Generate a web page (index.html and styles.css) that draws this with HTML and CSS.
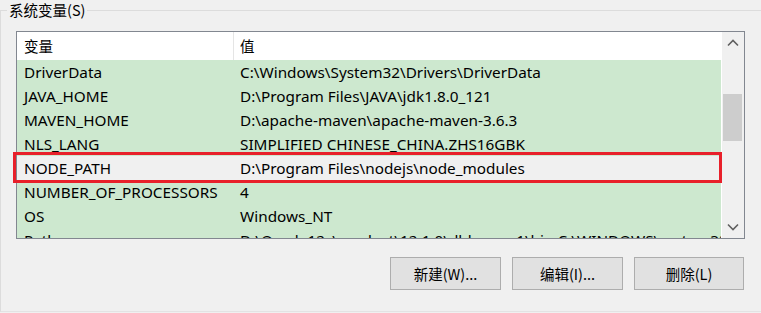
FILE: index.html
```html
<!DOCTYPE html>
<html lang="zh-CN">
<head>
<meta charset="utf-8">
<title>系统变量</title>
<link rel="stylesheet" href="styles.css">
</head>
<body>
<fieldset class="group">
  <legend class="group-title">系统变量(S)</legend>
  <div class="listwrap">
    <div class="listbox">
      <div class="list">
        <div class="row head">
          <div class="cell name">变量</div>
          <div class="cell value">值</div>
        </div>
        <div class="row"><div class="cell name">DriverData</div><div class="cell value">C:\Windows\System32\Drivers\DriverData</div></div>
        <div class="row"><div class="cell name">JAVA_HOME</div><div class="cell value">D:\Program Files\JAVA\jdk1.8.0_121</div></div>
        <div class="row"><div class="cell name">MAVEN_HOME</div><div class="cell value">D:\apache-maven\apache-maven-3.6.3</div></div>
        <div class="row"><div class="cell name">NLS_LANG</div><div class="cell value">SIMPLIFIED CHINESE_CHINA.ZHS16GBK</div></div>
        <div class="row selected"><div class="cell name">NODE_PATH</div><div class="cell value">D:\Program Files\nodejs\node_modules</div></div>
        <div class="row"><div class="cell name">NUMBER_OF_PROCESSORS</div><div class="cell value">4</div></div>
        <div class="row"><div class="cell name">OS</div><div class="cell value">Windows_NT</div></div>
        <div class="row"><div class="cell name">Path</div><div class="cell value">D:\Oracle12c\product\12.1.0\dbhome_1\bin;C:\WINDOWS\system32</div></div>
      </div>
      <div class="scrollbar">
        <svg class="arrow" width="12" height="8" viewBox="0 0 12 8"><path d="M1 6.5 L6 1.5 L11 6.5" fill="none" stroke="#606060" stroke-width="1.6"/></svg>
        <div class="track"><div class="thumb"></div></div>
        <svg class="arrow" width="12" height="8" viewBox="0 0 12 8"><path d="M1 1.5 L6 6.5 L11 1.5" fill="none" stroke="#606060" stroke-width="1.6"/></svg>
      </div>
    </div>
    <div class="highlight"></div>
  </div>
  <div class="buttons">
    <button class="btn">新建(W)...</button>
    <button class="btn">编辑(I)...</button>
    <button class="btn btn-last">删除(L)</button>
  </div>
</fieldset>
</body>
</html>
```
FILE: styles.css
```css
html, body {
  margin: 0;
  padding: 0;
  background: #f0f0f0;
}
body {
  width: 761px;
  height: 313px;
  overflow: hidden;
  font-family: "Noto Sans", "Noto Sans CJK SC", sans-serif;
  font-size: 15.3px;
  color: #000;
}
.group {
  margin: 0;
  padding: 11px 0 0 15px;
  border: 1px solid #dcdcdc;
  border-right: none;
  border-bottom-color: #e3e3e3;
  width: 780px;
  height: 312px;
  box-sizing: border-box;
}
.group-title {
  margin-left: -9px;
  padding: 0 2px;
  line-height: 20px;
  height: 20px;
  font-family: "Noto Sans CJK SC", sans-serif;
  font-size: 14.5px;
}
.listwrap {
  position: relative;
  width: 729px;
}
.listbox {
  display: flex;
  width: 729px;
  height: 208px;
  box-sizing: border-box;
  border: 1px solid #828790;
  background: #fff;
  overflow: hidden;
}
.list {
  width: 704px;
  flex: none;
  background: #cde8cf;
  overflow: hidden;
}
.row {
  display: flex;
  height: 24px;
  align-items: center;
  white-space: nowrap;
}
.row.head {
  height: 28px;
  background: #fff;
}
.row.selected {
  background: #f0f0f0;
}
.cell.name {
  width: 217px;
  padding-left: 7px;
  box-sizing: border-box;
  flex: none;
}
.cell.value {
  padding-left: 6px;
  flex: 1;
}
.head .cell {
  font-family: "Noto Sans CJK SC", sans-serif;
  font-size: 14.5px;
  height: 28px;
  line-height: 28px;
}
.head .cell.name {
  border-right: 1px solid #e5e5e5;
}
.scrollbar {
  width: 23px;
  flex: none;
  box-sizing: border-box;
  border-left: 1px solid #fff;
  background: #f0f0f0;
  display: flex;
  flex-direction: column;
  align-items: center;
}
.arrow {
  flex: none;
  margin: 7px 0;
}
.track {
  flex: 1;
  width: 100%;
  padding-top: 40px;
  box-sizing: border-box;
}
.thumb {
  margin-left: 1px;
  width: 19px;
  height: 47px;
  background: #cdcdcd;
}
.highlight {
  position: absolute;
  left: -3px;
  top: 121px;
  width: 709px;
  height: 31px;
  box-sizing: border-box;
  border: 3px solid #e8202a;
}
.buttons {
  display: flex;
  justify-content: flex-start;
  gap: 11px;
  margin-top: 18px;
  padding-left: 374px;
}
.btn {
  width: 111px;
  height: 33px;
  margin: 0;
  padding: 0;
  border: 1px solid #adadad;
  background: #e1e1e1;
  font-family: "Noto Sans CJK SC", sans-serif;
  font-size: 14.5px;
  color: #000;
}
.btn-last {
  width: 110px;
}
```
